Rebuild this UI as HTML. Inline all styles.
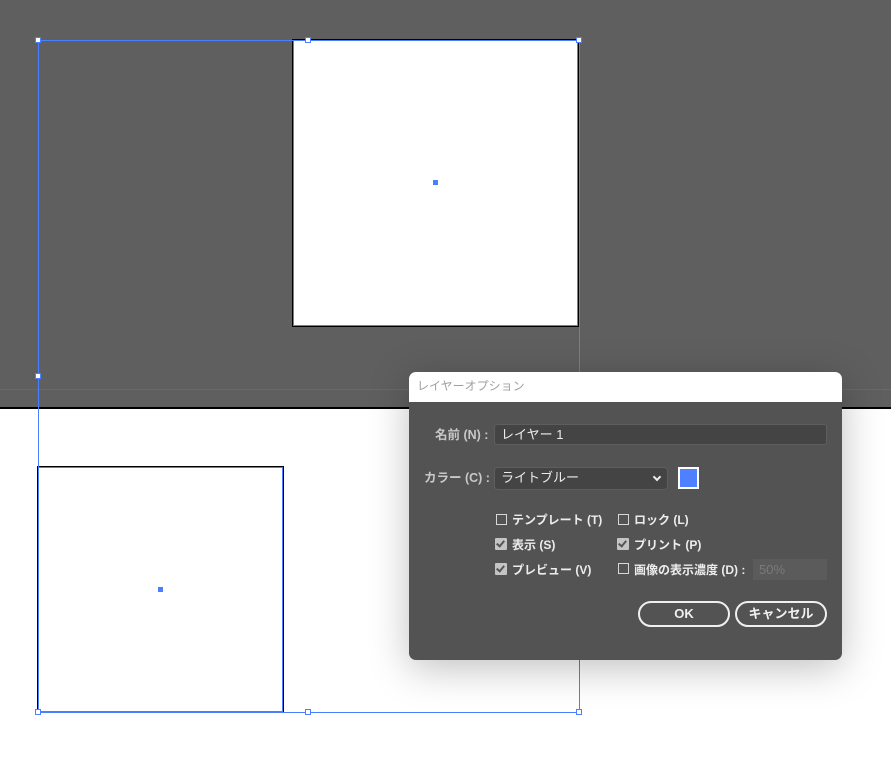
<!DOCTYPE html>
<html><head><meta charset="utf-8"><style>
*{margin:0;padding:0;box-sizing:border-box}
body{width:891px;height:768px;overflow:hidden;position:relative;background:#5f5f5f;font-family:"Liberation Sans","Noto Sans CJK JP",sans-serif}
.a{position:absolute}
.h{position:absolute;width:6px;height:6px;background:#fff;border:1px solid #4a80ff}
.dot{position:absolute;width:5px;height:5px;background:#4a80ff}
.lbl{position:absolute;color:#c8c8c8;font-size:12.5px;font-weight:bold;line-height:14px}
.txt{position:absolute;color:#ececec;font-size:12px;font-weight:bold;white-space:nowrap;line-height:14px}
.cb{position:absolute;width:11px;height:11px;border:1px solid #d8d8d8}
.cbc{position:absolute;width:12px;height:12px;background:#c4c4c4;border-radius:1px}
.cbc:after{content:"";position:absolute;left:3px;top:1px;width:3px;height:6px;border:solid #555;border-width:0 2px 2px 0;transform:rotate(40deg)}
.btn{position:absolute;height:26px;border:2px solid #f0f0f0;border-radius:13px;color:#f0f0f0;font-size:13px;text-align:center;line-height:22px;font-weight:bold}
</style></head><body>
<div class="a" style="left:0;top:407px;width:891px;height:361px;background:#fff;border-top:2px solid #000"></div>
<div class="a" style="left:0;top:389px;width:891px;height:1px;background:#c84040"></div>
<!-- top artboard -->
<div class="a" style="left:292px;top:39px;width:287px;height:288px;background:#fff;border:2px solid #000"></div>
<div class="a" style="left:293px;top:40px;width:285px;height:286px;border:1px solid #4a80ff"></div>
<div class="dot" style="left:433px;top:180px"></div>
<!-- bottom artboard -->
<div class="a" style="left:37px;top:466px;width:247px;height:247px;background:#fff;border:2px solid #000"></div>
<div class="a" style="left:38px;top:467px;width:245px;height:245px;border:1px solid #4a80ff"></div>
<div class="dot" style="left:158px;top:587px"></div>
<!-- selection box -->
<div class="a" style="left:38px;top:40px;width:542px;height:673px;border:1px solid #4a80ff"></div>
<div class="h" style="left:35px;top:37px"></div>
<div class="h" style="left:305px;top:37px"></div>
<div class="h" style="left:576px;top:37px"></div>
<div class="h" style="left:35px;top:373px"></div>
<div class="h" style="left:35px;top:709px"></div>
<div class="h" style="left:305px;top:709px"></div>
<div class="h" style="left:576px;top:709px"></div>
<!-- dialog -->
<div class="a" style="left:409px;top:372px;width:433px;height:288px;background:#535353;border-radius:7px;box-shadow:0 8px 40px rgba(0,0,0,0.25);overflow:hidden">
  <div class="a" style="left:0;top:0;width:433px;height:30px;background:#fff"></div>
  <div class="a" style="left:8px;top:7px;font-size:12px;color:#a0a0a0;line-height:14px">レイヤーオプション</div>
  <div class="lbl" style="left:26px;top:56px">名前 (N) :</div>
  <div class="a" style="left:85px;top:52px;width:333px;height:21px;background:#444;border:1px solid #5e5e5e;border-radius:3px"></div>
  <div class="txt" style="left:92px;top:56px;font-weight:normal;font-size:13px">レイヤー 1</div>
  <div class="lbl" style="left:15px;top:99px">カラー (C) :</div>
  <div class="a" style="left:85px;top:95px;width:174px;height:23px;background:#444;border:1px solid #5e5e5e;border-radius:4px"></div>
  <div class="txt" style="left:92px;top:99px;font-weight:normal;font-size:13px">ライトブルー</div>
  <div class="a" style="left:245px;top:102px;width:6px;height:6px;border:solid #eee;border-width:0 2px 2px 0;transform:rotate(45deg)"></div>
  <div class="a" style="left:269px;top:95px;width:21px;height:22px;background:#4f80ff;border:2px solid #fff"></div>
  <div class="cb" style="left:87px;top:142px"></div><div class="txt" style="left:103px;top:141px">テンプレート (T)</div>
  <div class="cb" style="left:209px;top:142px"></div><div class="txt" style="left:225px;top:141px">ロック (L)</div>
  <div class="cbc" style="left:86px;top:166px"></div><div class="txt" style="left:103px;top:166px">表示 (S)</div>
  <div class="cbc" style="left:208px;top:166px"></div><div class="txt" style="left:225px;top:166px">プリント (P)</div>
  <div class="cbc" style="left:86px;top:191px"></div><div class="txt" style="left:103px;top:191px">プレビュー (V)</div>
  <div class="cb" style="left:209px;top:191px"></div><div class="txt" style="left:225px;top:191px">画像の表示濃度 (D) :</div>
  <div class="a" style="left:344px;top:187px;width:74px;height:21px;background:#5b5b5b"></div>
  <div class="a" style="left:350px;top:191px;font-size:13px;color:#7a7a7a;line-height:14px">50%</div>
  <div class="btn" style="left:229px;top:229px;width:92px">OK</div>
  <div class="btn" style="left:326px;top:229px;width:92px">キャンセル</div>
</div>
</body></html>
